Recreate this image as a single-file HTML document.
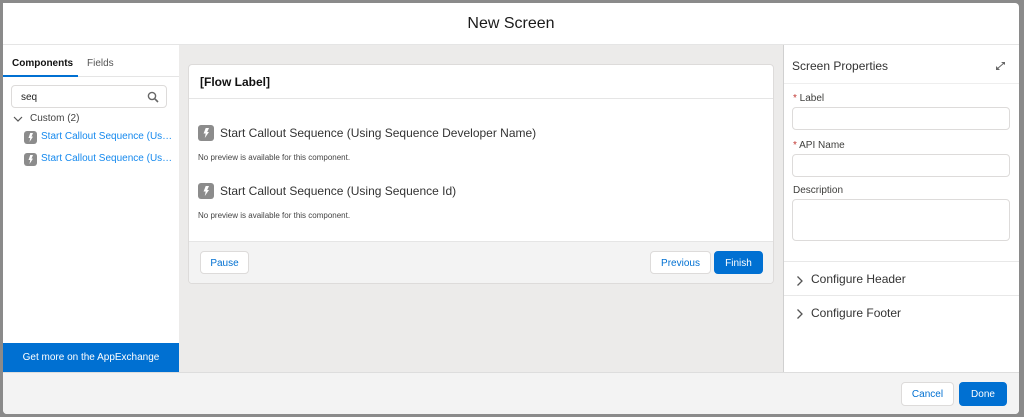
<!DOCTYPE html>
<html><head><meta charset="utf-8"><style>
*{box-sizing:border-box;margin:0;padding:0}
body{width:1024px;height:417px;background:#8a8a8a;font-family:"Liberation Sans",sans-serif;color:#3e3e3c;position:relative;overflow:hidden}
.abs{position:absolute;white-space:nowrap}
.win{left:3px;top:3px;width:1016px;height:411px;background:#fff;border-radius:0 4px 4px 4px;overflow:hidden}
.hdr{left:0;top:0;width:1016px;height:42px;border-bottom:1px solid #e5e5e5;text-align:center;font-size:16px;line-height:42px;color:#1b1b1b}
.left{left:0;top:42px;width:176px;height:327px;background:#fff}
.canvas{left:176px;top:42px;width:604px;height:327px;background:#ecebea}
.right{left:780px;top:42px;width:236px;height:327px;background:#fff;border-left:1px solid #d0d0d0}
.foot{left:0;top:369px;width:1016px;height:42px;background:#f3f3f3;border-top:1px solid #ddd}
.btn{position:absolute;border:1px solid #dddbda;border-radius:4px;background:#fff;color:#0070d2;font-size:11px;text-align:center}
.bb{background:#0070d2;border-color:#0070d2;color:#fff}
.ic{position:absolute;width:16px;height:16px;background:#8c8c8c;border-radius:3px}
.ic:after{content:"";position:absolute;left:5px;top:3px;width:6px;height:10px;background:#fff;clip-path:polygon(45% 0,100% 0,70% 40%,100% 40%,30% 100%,45% 55%,10% 55%)}
.ics{width:13px;height:13px}
.ics:after{left:4px;top:2px;width:5px;height:9px}
.inp{position:absolute;left:8px;width:218px;border:1px solid #dddbda;border-radius:4px;background:#fff}
.lbl{position:absolute;left:9px;font-size:10px;color:#3e3e3c}
.lbl b{color:#c23934;font-weight:normal}
.it{left:38px;width:133px;overflow:hidden;text-overflow:ellipsis;font-size:10px;color:#1589ee}
</style></head><body>
<div class="abs win">
 <div class="abs hdr">New Screen</div>
 <div class="abs left">
  <div class="abs" style="left:9px;top:13px;font-size:10px;font-weight:bold;color:#111">Components</div>
  <div class="abs" style="left:84px;top:13px;font-size:10px;color:#555">Fields</div>
  <div class="abs" style="left:0;top:31px;width:176px;border-bottom:1px solid #e5e5e5"></div>
  <div class="abs" style="left:0;top:30px;width:75px;height:2px;background:#0070d2"></div>
  <div class="abs" style="left:8px;top:40px;width:156px;height:23px;border:1px solid #dddbda;border-radius:4px;font-size:10px;line-height:23px;padding-left:9px;color:#222">seq
   <svg class="abs" style="right:7px;top:5px" width="12" height="12" viewBox="0 0 12 12"><circle cx="5" cy="5" r="3.6" fill="none" stroke="#666" stroke-width="1.4"/><path d="M7.6 7.6L11 11" stroke="#666" stroke-width="1.6"/></svg></div>
  <svg class="abs" style="left:10px;top:70px" width="10" height="8" viewBox="0 0 10 8"><path d="M1 2l4 4 4-4" fill="none" stroke="#555" stroke-width="1.2"/></svg>
  <div class="abs" style="left:27px;top:68px;font-size:10px;color:#444">Custom (2)</div>
  <div class="ic ics" style="left:21px;top:86px"></div>
  <div class="abs it" style="top:86px">Start Callout Sequence (Using...</div>
  <div class="ic ics" style="left:21px;top:108px"></div>
  <div class="abs it" style="top:108px">Start Callout Sequence (Using...</div>
  <div class="abs" style="left:0;top:298px;width:176px;height:29px;background:#0070d2;color:#fff;font-size:10px;text-align:center;line-height:29px">Get more on the AppExchange</div>
 </div>
 <div class="abs canvas">
  <div class="abs" style="left:9px;top:19px;width:586px;height:220px;background:#fff;border:1px solid #dddbda;border-radius:4px;overflow:hidden">
   <div class="abs" style="left:11px;top:10px;font-size:12px;font-weight:bold;color:#111">[Flow Label]</div>
   <div class="abs" style="left:0;top:33px;width:586px;border-bottom:1px solid #e5e5e5"></div>
   <div class="ic" style="left:9px;top:60px"></div>
   <div class="abs" style="left:31px;top:61px;font-size:12px;color:#333">Start Callout Sequence (Using Sequence Developer Name)</div>
   <div class="abs" style="left:9px;top:88px;font-size:8px;color:#444">No preview is available for this component.</div>
   <div class="ic" style="left:9px;top:118px"></div>
   <div class="abs" style="left:31px;top:119px;font-size:12px;color:#333">Start Callout Sequence (Using Sequence Id)</div>
   <div class="abs" style="left:9px;top:146px;font-size:8px;color:#444">No preview is available for this component.</div>
   <div class="abs" style="left:0;top:176px;width:586px;height:44px;background:#f3f3f3;border-top:1px solid #e5e5e5"></div>
   <div class="btn" style="left:11px;top:186px;width:49px;height:23px;line-height:23px;font-size:10px">Pause</div>
   <div class="btn" style="left:461px;top:186px;width:61px;height:23px;line-height:23px;font-size:10px">Previous</div>
   <div class="btn bb" style="left:525px;top:186px;width:49px;height:23px;line-height:23px;font-size:10px">Finish</div>
  </div>
 </div>
 <div class="abs right">
  <div class="abs" style="left:8px;top:14px;font-size:12px;color:#333">Screen Properties</div>
  <svg class="abs" style="left:211px;top:16px" width="11" height="10" viewBox="0 0 11 10"><path d="M2 8L9 2" stroke="#666" stroke-width="1"/><path d="M6 1h4v3z M1 5v4h4z" fill="#666"/></svg>
  <div class="abs" style="left:0;top:38px;width:236px;border-bottom:1px solid #eee"></div>
  <div class="lbl" style="top:48px"><b>*</b> Label</div>
  <div class="inp" style="top:62px;height:23px"></div>
  <div class="lbl" style="top:95px"><b>*</b> API Name</div>
  <div class="inp" style="top:109px;height:23px"></div>
  <div class="lbl" style="top:140px">Description</div>
  <div class="inp" style="top:154px;height:42px"></div>
  <div class="abs" style="left:0;top:216px;width:236px;border-bottom:1px solid #e8e8e8"></div>
  <svg class="abs" style="left:12px;top:230px" width="8" height="12" viewBox="0 0 8 12"><path d="M1.5 1.5l4.5 4.5-4.5 4.5" fill="none" stroke="#555" stroke-width="1.3"/></svg>
  <div class="abs" style="left:27px;top:227px;font-size:12px;color:#333">Configure Header</div>
  <div class="abs" style="left:0;top:250px;width:236px;border-bottom:1px solid #e8e8e8"></div>
  <svg class="abs" style="left:12px;top:263px" width="8" height="12" viewBox="0 0 8 12"><path d="M1.5 1.5l4.5 4.5-4.5 4.5" fill="none" stroke="#555" stroke-width="1.3"/></svg>
  <div class="abs" style="left:27px;top:261px;font-size:12px;color:#333">Configure Footer</div>
 </div>
 <div class="abs foot">
  <div class="btn" style="left:898px;top:9px;width:53px;height:24px;line-height:24px;font-size:10px">Cancel</div>
  <div class="btn bb" style="left:956px;top:9px;width:48px;height:24px;line-height:24px;font-size:10px">Done</div>
 </div>
</div>
</body></html>
